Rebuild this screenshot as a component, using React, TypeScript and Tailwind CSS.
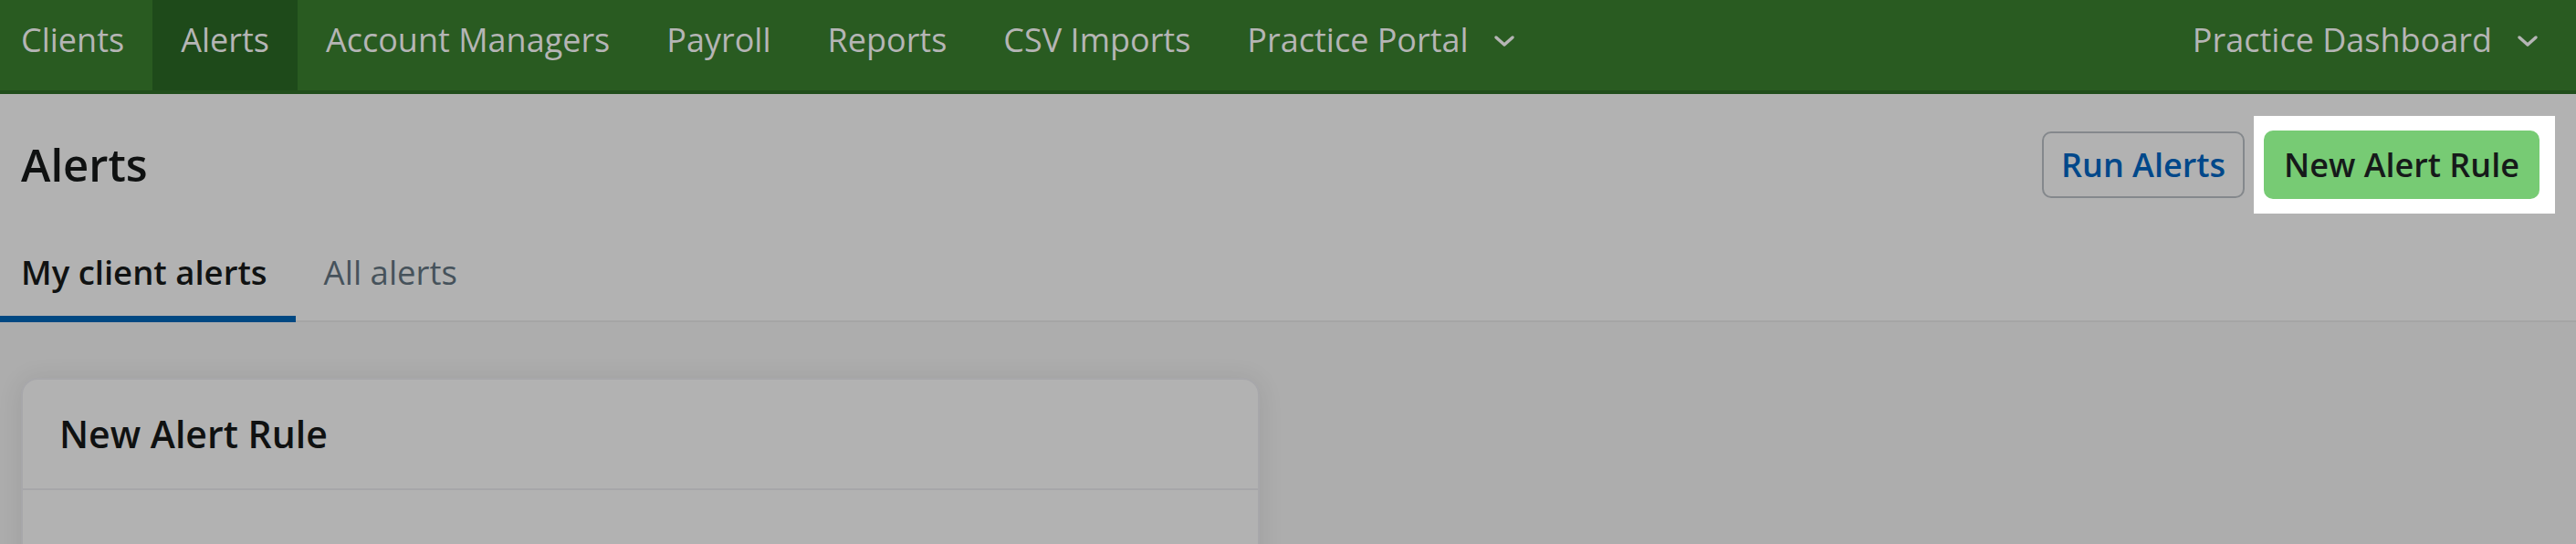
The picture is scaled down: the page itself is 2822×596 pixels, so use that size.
import React from 'react';

const navItems = ['Clients', 'Alerts', 'Account Managers', 'Payroll', 'Reports', 'CSV Imports'];

const Chevron = () => (
  <svg width="24" height="14" viewBox="0 0 24 14" fill="none" className="shrink-0">
    <polyline points="3,3 12,11 21,3" stroke="currentColor" strokeWidth="3.5" strokeLinecap="round" strokeLinejoin="round" />
  </svg>
);

export default function App() {
  return (
    <div className="h-[596px] overflow-hidden bg-[#adadad] font-['Open_Sans',sans-serif]">
      {/* Top nav */}
      <nav className="flex h-[103px] bg-[#295b21] border-b-4 border-[#214e1c] text-[#b5b5b5] text-[36px] leading-none">
        <div className="flex -ml-2">
          {navItems.map((item) => (
            <a key={item} className={`px-[31px] pt-[26px] ${item === 'Alerts' ? 'bg-[#1e4a1a]' : ''}`}>
              {item}
            </a>
          ))}
          <a className="flex items-start gap-[27px] px-[31px] pt-[26px]">
            Practice Portal
            <span className="pt-[12px]">
              <Chevron />
            </span>
          </a>
        </div>
        <a className="ml-auto flex items-start gap-[27px] pr-[41px] pt-[26px]">
          Practice Dashboard
          <span className="pt-[12px]">
            <Chevron />
          </span>
        </a>
      </nav>

      {/* Page header */}
      <div className="bg-[#b2b2b2] px-[23px] pt-[40px]">
        <div className="flex items-center h-[75px]">
          <h1 className="text-[49px] font-semibold leading-none text-[#0f1111]">Alerts</h1>
          <div className="ml-auto flex items-center gap-[10px]">
            <button className="h-[73px] px-[19px] border-2 border-[#84888c] rounded-[10px] text-[36px] font-semibold leading-none text-[#00488a]">
              Run Alerts
            </button>
            <div className="bg-white pl-[11px] pr-[17px] py-[16px]">
              <button className="h-[75px] px-[22px] rounded-[10px] bg-[#77cb74] text-[36px] font-semibold leading-none text-[#161a1a]">
                New Alert Rule
              </button>
            </div>
          </div>
        </div>

        {/* Tabs */}
        <div className="flex -mx-[23px] mt-[62px] border-b-2 border-[#a5a5a5] text-[36.5px] leading-none">
          <a className="pl-[23px] pr-[31px] pb-[29px] -mb-[2px] border-b-[7px] border-[#004882] font-semibold text-[#101212]">
            My client alerts
          </a>
          <a className="px-[31px] pb-[29px] -mb-[2px] border-b-[7px] border-transparent text-[#46525b]">All alerts</a>
        </div>
      </div>

      {/* Content */}
      <div className="px-[23px] pt-[61px]">
        <div className="w-[1357px] h-[400px] bg-[#b2b2b2] border-2 border-[#a7a7aa] rounded-[18px] shadow-[0_2px_28px_rgba(0,0,0,0.09)]">
          <div className="h-[121px] flex items-center px-[40px] border-b-2 border-[#a6a6a9]">
            <h2 className="text-[41px] font-semibold leading-none text-[#0f1111]">New Alert Rule</h2>
          </div>
        </div>
      </div>
    </div>
  );
}
